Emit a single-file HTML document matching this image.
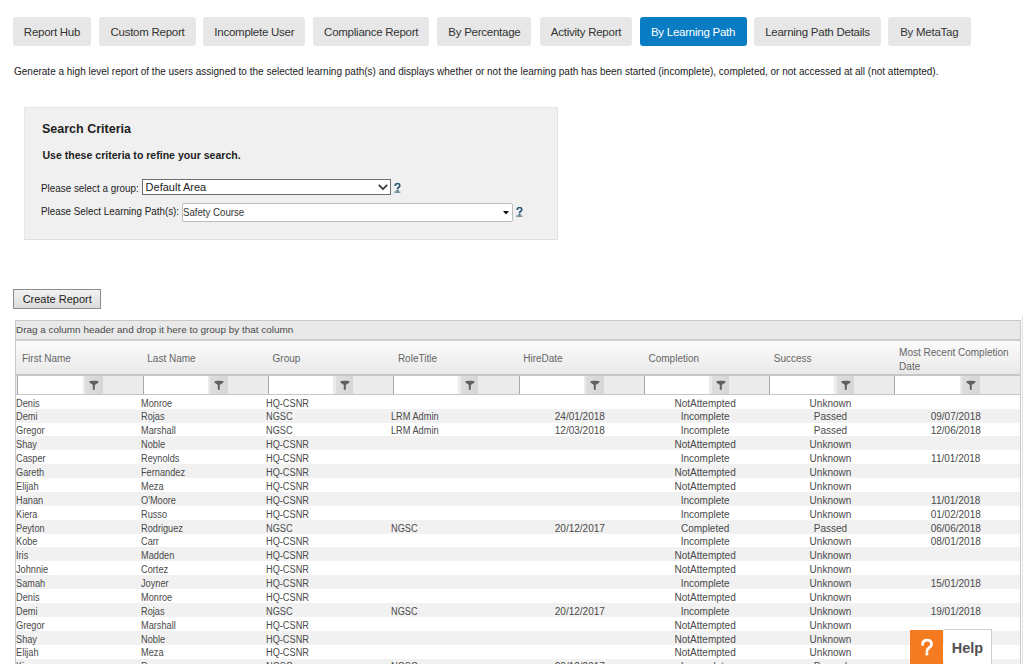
<!DOCTYPE html>
<html><head><meta charset="utf-8"><style>
*{box-sizing:border-box;margin:0;padding:0}
html,body{width:1024px;height:664px;overflow:hidden;background:#fff}
body{position:relative;font-family:"Liberation Sans",sans-serif;color:#333}
.a{position:absolute;white-space:nowrap}
.tab{position:absolute;top:17px;height:29px;background:#e7e7e7;border-radius:3px;color:#333;font-size:11.5px;letter-spacing:-0.25px;line-height:31px;text-align:center}
.tab.on{background:#0a7cc4;color:#fff}
.desc{left:14px;top:66.7px;font-size:10px;line-height:10px;color:#1a1a1a}
.panel{left:24.4px;top:106.7px;width:534px;height:133px;background:#f0f0f0;border:1px solid #e6e6e6;border-right-color:#e0e0e0;border-bottom-color:#dedede}
.lbl{font-size:10.5px;line-height:10px;color:#222;transform:scaleX(0.91);transform-origin:0 0}
.sel{position:absolute;background:#fff}
.q{position:absolute;font-weight:bold;color:#255a75;text-decoration:underline;font-size:11px;line-height:10px}
.btn{left:13.4px;top:289.1px;width:87.6px;height:20px;border:1px solid #8c8c8c;background:linear-gradient(#f2f2f2,#dcdcdc);font-size:11px;line-height:18px;color:#222;text-align:center}
.grid{left:15px;top:319.8px;width:1006px;height:360px;border:1px solid #c9c9c9;background:#fff}
.grp{position:absolute;left:0;top:0;width:100%;height:20.3px;background:#e9e9e9;border-bottom:2px solid #cdcdcd}
.hdr{position:absolute;left:0;top:20.3px;width:100%;height:34.5px;background:linear-gradient(#fbfbfb,#e9e9e9);border-bottom:2px solid #c6c6c6}
.flt{position:absolute;left:0;top:54.8px;width:100%;height:19.2px;background:#ebebeb;border-bottom:1px solid #c6c6c6}
.h{position:absolute;font-size:10px;line-height:12.5px;color:#666}
.fi{position:absolute;top:0px;height:18.2px;width:65.3px;background:#fff;border-left:1px solid #a8a8a8}
.fb{position:absolute;top:0.2px;height:18px;width:17.6px;background:linear-gradient(90deg,#dedede,#d6d6d6);border-radius:1px}
.row{position:absolute;left:0;width:100%;height:13.88px}
.row.odd{background:#f1f1f1}
.c{position:absolute;top:1.8px;font-size:10px;line-height:13.88px;color:#4a4a4a;white-space:nowrap;transform:scaleX(0.92);transform-origin:0 50%}
.cc{text-align:center;width:125.3px;transform:none}
</style></head><body>

<div class="tab" style="left:13px;width:78.0px">Report Hub</div>
<div class="tab" style="left:99.0px;width:97.0px">Custom Report</div>
<div class="tab" style="left:203.2px;width:102.3px">Incomplete User</div>
<div class="tab" style="left:313.2px;width:116.0px">Compliance Report</div>
<div class="tab" style="left:437.3px;width:94.2px">By Percentage</div>
<div class="tab" style="left:539.6px;width:92.8px">Activity Report</div>
<div class="tab on" style="left:639.5px;width:107.1px">By Learning Path</div>
<div class="tab" style="left:754px;width:127.0px">Learning Path Details</div>
<div class="tab" style="left:888px;width:82.6px">By MetaTag</div>
<div class="a desc">Generate a high level report of the users assigned to the selected learning path(s) and displays whether or not the learning path has been started (incomplete), completed, or not accessed at all (not attempted).</div>
<div class="a panel"></div>
<div class="a" style="left:42px;top:122.5px;font-size:12.5px;line-height:12px;font-weight:bold;color:#1e1e1e">Search Criteria</div>
<div class="a" style="left:42.5px;top:150px;font-size:10.55px;line-height:10px;font-weight:bold;color:#1e1e1e">Use these criteria to refine your search.</div>
<div class="a lbl" style="left:41.3px;top:182.6px;transform:scaleX(0.94)">Please select a group:</div>
<div class="sel" style="left:141.8px;top:179.4px;width:249.5px;height:15.3px;border:1px solid #6e6e6e"></div>
<div class="a" style="left:145.6px;top:181.5px;font-size:11px;line-height:11px;color:#222">Default Area</div>
<svg class="a" style="left:377px;top:182.5px" width="12" height="8" viewBox="0 0 12 8"><path d="M1.8 1.8 L6 6 L10.2 1.8" fill="none" stroke="#333" stroke-width="1.7"/></svg>
<svg class="a" style="left:393.7px;top:183.0px" width="8" height="11" viewBox="0 0 8 11"><path d="M1.2 3 C1.2 1.2 2.3 0.5 3.5 0.5 C4.9 0.5 5.8 1.3 5.8 2.5 C5.8 3.7 5 4.1 4.2 4.7 C3.7 5.1 3.5 5.5 3.5 6.3" fill="none" stroke="#2b5a72" stroke-width="1.7"/><rect x="2.5" y="6.9" width="2" height="1.5" fill="#2b5a72"/><rect x="0.3" y="8.6" width="6" height="1" fill="#2b5a72"/></svg>
<div class="a lbl" style="left:41.3px;top:206.1px;transform:scaleX(0.935)">Please Select Learning Path(s):</div>
<div class="sel" style="left:182.2px;top:203.3px;width:330.8px;height:18.3px;border:1px solid #bdbdbd;border-radius:2px"></div>
<div class="a" style="left:182.6px;top:207.4px;font-size:10.5px;line-height:10px;color:#333;transform:scaleX(0.92);transform-origin:0 0">Safety Course</div>
<svg class="a" style="left:502.8px;top:210.6px" width="6" height="4" viewBox="0 0 6 4"><path d="M0 0 L6 0 L3 3.6Z" fill="#111"/></svg>
<svg class="a" style="left:516.3px;top:207.3px" width="8" height="11" viewBox="0 0 8 11"><path d="M1.2 3 C1.2 1.2 2.3 0.5 3.5 0.5 C4.9 0.5 5.8 1.3 5.8 2.5 C5.8 3.7 5 4.1 4.2 4.7 C3.7 5.1 3.5 5.5 3.5 6.3" fill="none" stroke="#2b5a72" stroke-width="1.7"/><rect x="2.5" y="6.9" width="2" height="1.5" fill="#2b5a72"/><rect x="0.3" y="8.6" width="6" height="1" fill="#2b5a72"/></svg>
<div class="a btn">Create Report</div>
<div class="a grid">
<div class="grp"><div class="a" style="left:0px;top:4.7px;font-size:9.95px;line-height:10px;color:#4a4a4a">Drag a column header and drop it here to group by that column</div></div>
<div class="hdr">
<div class="h" style="left:6.0px;top:11.9px;white-space:nowrap">First Name</div>
<div class="h" style="left:131.3px;top:11.9px;white-space:nowrap">Last Name</div>
<div class="h" style="left:256.6px;top:11.9px;white-space:nowrap">Group</div>
<div class="h" style="left:381.9px;top:11.9px;white-space:nowrap">RoleTitle</div>
<div class="h" style="left:507.2px;top:11.9px;white-space:nowrap">HireDate</div>
<div class="h" style="left:632.5px;top:11.9px;white-space:nowrap">Completion</div>
<div class="h" style="left:757.8px;top:11.9px;white-space:nowrap">Success</div>
<div class="h" style="left:883.1px;top:5.4px;line-height:13.2px;white-space:nowrap">Most Recent Completion<br>Date</div>
</div>
<div class="flt">
<div class="fi" style="left:1.3px"></div><div class="fb" style="left:69.0px"><svg width="17" height="18" viewBox="0 0 17 18" style="position:absolute;left:0;top:0"><path d="M4.3 5.8 C4.3 4.5 13.6 4.5 13.6 5.8 C13.6 7 10.6 8.1 9.8 8.9 V13.6 C9.8 14.2 7.8 14.2 7.8 13.6 V8.9 C7.2 8.1 4.3 7 4.3 5.8Z" fill="#606060"/></svg></div>
<div class="fi" style="left:126.6px"></div><div class="fb" style="left:194.3px"><svg width="17" height="18" viewBox="0 0 17 18" style="position:absolute;left:0;top:0"><path d="M4.3 5.8 C4.3 4.5 13.6 4.5 13.6 5.8 C13.6 7 10.6 8.1 9.8 8.9 V13.6 C9.8 14.2 7.8 14.2 7.8 13.6 V8.9 C7.2 8.1 4.3 7 4.3 5.8Z" fill="#606060"/></svg></div>
<div class="fi" style="left:251.9px"></div><div class="fb" style="left:319.6px"><svg width="17" height="18" viewBox="0 0 17 18" style="position:absolute;left:0;top:0"><path d="M4.3 5.8 C4.3 4.5 13.6 4.5 13.6 5.8 C13.6 7 10.6 8.1 9.8 8.9 V13.6 C9.8 14.2 7.8 14.2 7.8 13.6 V8.9 C7.2 8.1 4.3 7 4.3 5.8Z" fill="#606060"/></svg></div>
<div class="fi" style="left:377.2px"></div><div class="fb" style="left:444.9px"><svg width="17" height="18" viewBox="0 0 17 18" style="position:absolute;left:0;top:0"><path d="M4.3 5.8 C4.3 4.5 13.6 4.5 13.6 5.8 C13.6 7 10.6 8.1 9.8 8.9 V13.6 C9.8 14.2 7.8 14.2 7.8 13.6 V8.9 C7.2 8.1 4.3 7 4.3 5.8Z" fill="#606060"/></svg></div>
<div class="fi" style="left:502.5px"></div><div class="fb" style="left:570.2px"><svg width="17" height="18" viewBox="0 0 17 18" style="position:absolute;left:0;top:0"><path d="M4.3 5.8 C4.3 4.5 13.6 4.5 13.6 5.8 C13.6 7 10.6 8.1 9.8 8.9 V13.6 C9.8 14.2 7.8 14.2 7.8 13.6 V8.9 C7.2 8.1 4.3 7 4.3 5.8Z" fill="#606060"/></svg></div>
<div class="fi" style="left:627.8px"></div><div class="fb" style="left:695.5px"><svg width="17" height="18" viewBox="0 0 17 18" style="position:absolute;left:0;top:0"><path d="M4.3 5.8 C4.3 4.5 13.6 4.5 13.6 5.8 C13.6 7 10.6 8.1 9.8 8.9 V13.6 C9.8 14.2 7.8 14.2 7.8 13.6 V8.9 C7.2 8.1 4.3 7 4.3 5.8Z" fill="#606060"/></svg></div>
<div class="fi" style="left:753.1px"></div><div class="fb" style="left:820.8px"><svg width="17" height="18" viewBox="0 0 17 18" style="position:absolute;left:0;top:0"><path d="M4.3 5.8 C4.3 4.5 13.6 4.5 13.6 5.8 C13.6 7 10.6 8.1 9.8 8.9 V13.6 C9.8 14.2 7.8 14.2 7.8 13.6 V8.9 C7.2 8.1 4.3 7 4.3 5.8Z" fill="#606060"/></svg></div>
<div class="fi" style="left:878.4px"></div><div class="fb" style="left:946.1px"><svg width="17" height="18" viewBox="0 0 17 18" style="position:absolute;left:0;top:0"><path d="M4.3 5.8 C4.3 4.5 13.6 4.5 13.6 5.8 C13.6 7 10.6 8.1 9.8 8.9 V13.6 C9.8 14.2 7.8 14.2 7.8 13.6 V8.9 C7.2 8.1 4.3 7 4.3 5.8Z" fill="#606060"/></svg></div>
</div>
<div class="row" style="top:74.00px">
<div class="c" style="left:-0.5px">Denis</div>
<div class="c" style="left:124.8px">Monroe</div>
<div class="c" style="left:250.1px">HQ-CSNR</div>
<div class="c cc" style="left:626.5px">NotAttempted</div>
<div class="c cc" style="left:751.8px">Unknown</div>
</div>
<div class="row odd" style="top:87.88px">
<div class="c" style="left:-0.5px">Demi</div>
<div class="c" style="left:124.8px">Rojas</div>
<div class="c" style="left:250.1px">NGSC</div>
<div class="c" style="left:375.4px">LRM Admin</div>
<div class="c cc" style="left:501.2px">24/01/2018</div>
<div class="c cc" style="left:626.5px">Incomplete</div>
<div class="c cc" style="left:751.8px">Passed</div>
<div class="c cc" style="left:877.1px">09/07/2018</div>
</div>
<div class="row" style="top:101.76px">
<div class="c" style="left:-0.5px">Gregor</div>
<div class="c" style="left:124.8px">Marshall</div>
<div class="c" style="left:250.1px">NGSC</div>
<div class="c" style="left:375.4px">LRM Admin</div>
<div class="c cc" style="left:501.2px">12/03/2018</div>
<div class="c cc" style="left:626.5px">Incomplete</div>
<div class="c cc" style="left:751.8px">Passed</div>
<div class="c cc" style="left:877.1px">12/06/2018</div>
</div>
<div class="row odd" style="top:115.64px">
<div class="c" style="left:-0.5px">Shay</div>
<div class="c" style="left:124.8px">Noble</div>
<div class="c" style="left:250.1px">HQ-CSNR</div>
<div class="c cc" style="left:626.5px">NotAttempted</div>
<div class="c cc" style="left:751.8px">Unknown</div>
</div>
<div class="row" style="top:129.52px">
<div class="c" style="left:-0.5px">Casper</div>
<div class="c" style="left:124.8px">Reynolds</div>
<div class="c" style="left:250.1px">HQ-CSNR</div>
<div class="c cc" style="left:626.5px">Incomplete</div>
<div class="c cc" style="left:751.8px">Unknown</div>
<div class="c cc" style="left:877.1px">11/01/2018</div>
</div>
<div class="row odd" style="top:143.40px">
<div class="c" style="left:-0.5px">Gareth</div>
<div class="c" style="left:124.8px">Fernandez</div>
<div class="c" style="left:250.1px">HQ-CSNR</div>
<div class="c cc" style="left:626.5px">NotAttempted</div>
<div class="c cc" style="left:751.8px">Unknown</div>
</div>
<div class="row" style="top:157.28px">
<div class="c" style="left:-0.5px">Elijah</div>
<div class="c" style="left:124.8px">Meza</div>
<div class="c" style="left:250.1px">HQ-CSNR</div>
<div class="c cc" style="left:626.5px">NotAttempted</div>
<div class="c cc" style="left:751.8px">Unknown</div>
</div>
<div class="row odd" style="top:171.16px">
<div class="c" style="left:-0.5px">Hanan</div>
<div class="c" style="left:124.8px">O'Moore</div>
<div class="c" style="left:250.1px">HQ-CSNR</div>
<div class="c cc" style="left:626.5px">Incomplete</div>
<div class="c cc" style="left:751.8px">Unknown</div>
<div class="c cc" style="left:877.1px">11/01/2018</div>
</div>
<div class="row" style="top:185.04px">
<div class="c" style="left:-0.5px">Kiera</div>
<div class="c" style="left:124.8px">Russo</div>
<div class="c" style="left:250.1px">HQ-CSNR</div>
<div class="c cc" style="left:626.5px">Incomplete</div>
<div class="c cc" style="left:751.8px">Unknown</div>
<div class="c cc" style="left:877.1px">01/02/2018</div>
</div>
<div class="row odd" style="top:198.92px">
<div class="c" style="left:-0.5px">Peyton</div>
<div class="c" style="left:124.8px">Rodriguez</div>
<div class="c" style="left:250.1px">NGSC</div>
<div class="c" style="left:375.4px">NGSC</div>
<div class="c cc" style="left:501.2px">20/12/2017</div>
<div class="c cc" style="left:626.5px">Completed</div>
<div class="c cc" style="left:751.8px">Passed</div>
<div class="c cc" style="left:877.1px">06/06/2018</div>
</div>
<div class="row" style="top:212.80px">
<div class="c" style="left:-0.5px">Kobe</div>
<div class="c" style="left:124.8px">Carr</div>
<div class="c" style="left:250.1px">HQ-CSNR</div>
<div class="c cc" style="left:626.5px">Incomplete</div>
<div class="c cc" style="left:751.8px">Unknown</div>
<div class="c cc" style="left:877.1px">08/01/2018</div>
</div>
<div class="row odd" style="top:226.68px">
<div class="c" style="left:-0.5px">Iris</div>
<div class="c" style="left:124.8px">Madden</div>
<div class="c" style="left:250.1px">HQ-CSNR</div>
<div class="c cc" style="left:626.5px">NotAttempted</div>
<div class="c cc" style="left:751.8px">Unknown</div>
</div>
<div class="row" style="top:240.56px">
<div class="c" style="left:-0.5px">Johnnie</div>
<div class="c" style="left:124.8px">Cortez</div>
<div class="c" style="left:250.1px">HQ-CSNR</div>
<div class="c cc" style="left:626.5px">NotAttempted</div>
<div class="c cc" style="left:751.8px">Unknown</div>
</div>
<div class="row odd" style="top:254.44px">
<div class="c" style="left:-0.5px">Samah</div>
<div class="c" style="left:124.8px">Joyner</div>
<div class="c" style="left:250.1px">HQ-CSNR</div>
<div class="c cc" style="left:626.5px">Incomplete</div>
<div class="c cc" style="left:751.8px">Unknown</div>
<div class="c cc" style="left:877.1px">15/01/2018</div>
</div>
<div class="row" style="top:268.32px">
<div class="c" style="left:-0.5px">Denis</div>
<div class="c" style="left:124.8px">Monroe</div>
<div class="c" style="left:250.1px">HQ-CSNR</div>
<div class="c cc" style="left:626.5px">NotAttempted</div>
<div class="c cc" style="left:751.8px">Unknown</div>
</div>
<div class="row odd" style="top:282.20px">
<div class="c" style="left:-0.5px">Demi</div>
<div class="c" style="left:124.8px">Rojas</div>
<div class="c" style="left:250.1px">NGSC</div>
<div class="c" style="left:375.4px">NGSC</div>
<div class="c cc" style="left:501.2px">20/12/2017</div>
<div class="c cc" style="left:626.5px">Incomplete</div>
<div class="c cc" style="left:751.8px">Unknown</div>
<div class="c cc" style="left:877.1px">19/01/2018</div>
</div>
<div class="row" style="top:296.08px">
<div class="c" style="left:-0.5px">Gregor</div>
<div class="c" style="left:124.8px">Marshall</div>
<div class="c" style="left:250.1px">HQ-CSNR</div>
<div class="c cc" style="left:626.5px">NotAttempted</div>
<div class="c cc" style="left:751.8px">Unknown</div>
</div>
<div class="row odd" style="top:309.96px">
<div class="c" style="left:-0.5px">Shay</div>
<div class="c" style="left:124.8px">Noble</div>
<div class="c" style="left:250.1px">HQ-CSNR</div>
<div class="c cc" style="left:626.5px">NotAttempted</div>
<div class="c cc" style="left:751.8px">Unknown</div>
</div>
<div class="row" style="top:323.84px">
<div class="c" style="left:-0.5px">Elijah</div>
<div class="c" style="left:124.8px">Meza</div>
<div class="c" style="left:250.1px">HQ-CSNR</div>
<div class="c cc" style="left:626.5px">NotAttempted</div>
<div class="c cc" style="left:751.8px">Unknown</div>
</div>
<div class="row odd" style="top:337.72px">
<div class="c" style="left:-0.5px">Kiera</div>
<div class="c" style="left:124.8px">Russo</div>
<div class="c" style="left:250.1px">NGSC</div>
<div class="c" style="left:375.4px">NGSC</div>
<div class="c cc" style="left:501.2px">20/12/2017</div>
<div class="c cc" style="left:626.5px">Incomplete</div>
<div class="c cc" style="left:751.8px">Passed</div>
</div>
</div>
<div class="a" style="left:1022px;top:315px;width:1px;height:360px;background:#e2e2e2"></div>
<div class="a" style="left:943.5px;top:629.3px;width:48.3px;height:40px;background:#fff;border:1px solid #cfcfcf;border-left:none"></div>
<div class="a" style="left:951.8px;top:639.5px;font-size:14.5px;line-height:16px;font-weight:bold;color:#505050">Help</div>
<div class="a" style="left:910.3px;top:629.8px;width:33.2px;height:40px;background:#f47b20"></div>
<svg class="a" style="left:0;top:0" width="1024" height="664"><path d="M922.6 644.6 C922.6 641.6 924.6 640.1 927.1 640.1 C929.9 640.1 931.6 641.9 931.6 644.3 C931.6 646.4 929.9 647.3 928.4 648.3 C927.3 649 926.9 649.6 926.9 651.2" fill="none" stroke="#fff" stroke-width="2.8" stroke-linecap="round"/><circle cx="926.9" cy="653.9" r="1.6" fill="#fff"/></svg>
</body></html>
